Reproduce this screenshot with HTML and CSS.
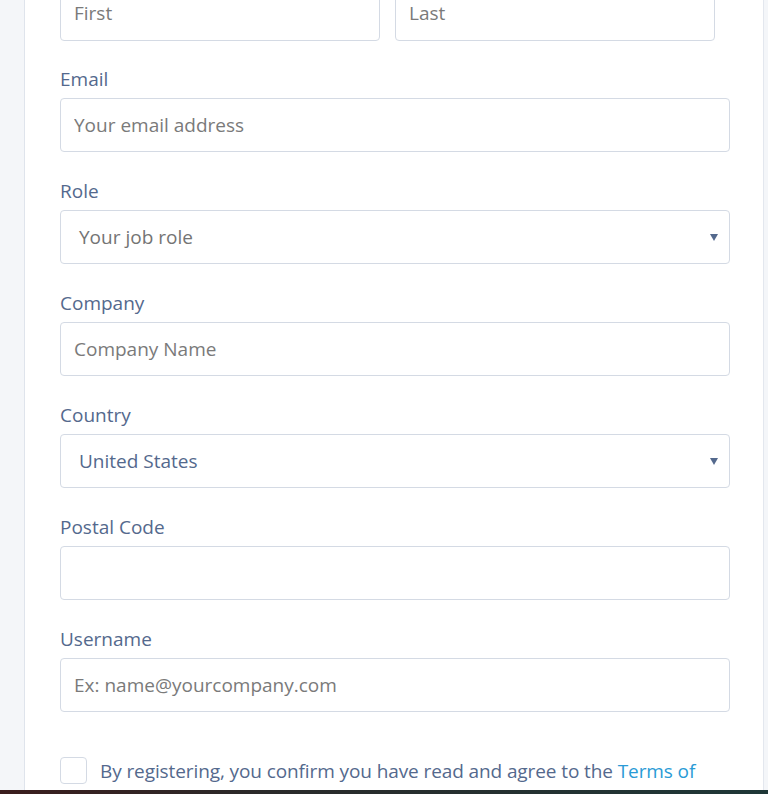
FILE: index.html
```html
<!DOCTYPE html>
<html lang="en">
<head>
<meta charset="utf-8">
<title>Register</title>
<link rel="stylesheet" href="styles.css">
</head>
<body>
<div class="page">
  <div class="gutter"></div>
  <main class="panel">
    <form class="form">
      <div class="name-row">
        <input class="field" type="text" placeholder="First">
        <input class="field" type="text" placeholder="Last">
      </div>
      <div class="group">
        <label class="label">Email</label>
        <input class="field" type="text" placeholder="Your email address">
      </div>
      <div class="group">
        <label class="label">Role</label>
        <div class="select select-empty"><span>Your job role</span><span class="arrow"></span></div>
      </div>
      <div class="group">
        <label class="label">Company</label>
        <input class="field" type="text" placeholder="Company Name">
      </div>
      <div class="group">
        <label class="label">Country</label>
        <div class="select"><span>United States</span><span class="arrow"></span></div>
      </div>
      <div class="group">
        <label class="label">Postal Code</label>
        <input class="field" type="text">
      </div>
      <div class="group">
        <label class="label">Username</label>
        <input class="field" type="text" placeholder="Ex: name@yourcompany.com">
      </div>
      <div class="terms">
        <span class="checkbox"></span>
        <span class="terms-text">By registering, you confirm you have read and agree to the <a class="link" href="#">Terms of</a></span>
      </div>
    </form>
  </main>
  <div class="edge"></div>
</div>
<div class="bottom-bar"></div>
</body>
</html>
```

FILE: styles.css
```css
html, body {
  margin: 0;
  padding: 0;
  height: 794px;
  overflow: hidden;
  background: #f4f6f9;
  font-family: "Open Sans", "Noto Sans", sans-serif;
}
.page {
  display: flex;
  height: 790px;
  overflow: hidden;
}
.gutter {
  width: 24px;
  flex: none;
  background: #f4f6f9;
}
.edge {
  width: 4px;
  flex: none;
  background: #f4f6f9;
}
.panel {
  flex: 1;
  background: #fff;
  border-left: 1px solid #dfe4ec;
  border-right: 1px solid #e3e7ee;
  padding: 0 33px 0 35px;
  overflow: hidden;
}
.form {
  margin-top: -13px;
  display: flex;
  flex-direction: column;
}
.name-row {
  display: grid;
  grid-template-columns: 1fr 1fr;
  gap: 15px;
  padding-right: 15px;
  margin-bottom: 26px;
}
.name-row .field {
  padding-bottom: 3px;
}
.group {
  display: flex;
  flex-direction: column;
  margin-bottom: 27px;
}
.label {
  font-size: 19px;
  line-height: 24px;
  color: #54698d;
  margin-bottom: 7px;
}
.field, .select {
  box-sizing: border-box;
  height: 54px;
  width: 100%;
  border: 1px solid #d4dae4;
  border-radius: 4px;
  background: #fff;
  font-family: inherit;
  font-size: 19px;
  color: #16325c;
  padding: 0 13px;
  margin: 0;
  outline: none;
}
.field::placeholder {
  color: #7a7a7a;
  opacity: 1;
}
.select {
  display: flex;
  align-items: center;
  justify-content: space-between;
  padding: 0 11px 0 18px;
  color: #54698d;
}
.select-empty {
  color: #747474;
}
.arrow {
  width: 0;
  height: 0;
  border-left: 4px solid transparent;
  border-right: 4px solid transparent;
  border-top: 7px solid #54698d;
}
.terms {
  display: flex;
  align-items: center;
  gap: 13px;
  margin-top: 18px;
}
.checkbox {
  box-sizing: border-box;
  width: 27px;
  height: 27px;
  flex: none;
  border: 1px solid #d4dae4;
  border-radius: 4px;
  background: #fff;
}
.terms-text {
  font-size: 19px;
  line-height: 24px;
  letter-spacing: -0.1px;
  color: #54698d;
  white-space: nowrap;
}
.link {
  color: #2a9bd6;
  text-decoration: none;
}
.bottom-bar {
  height: 4px;
  background: linear-gradient(90deg, #3b1d1d 0%, #2a2a2a 35%, #1e3737 100%);
}
```
